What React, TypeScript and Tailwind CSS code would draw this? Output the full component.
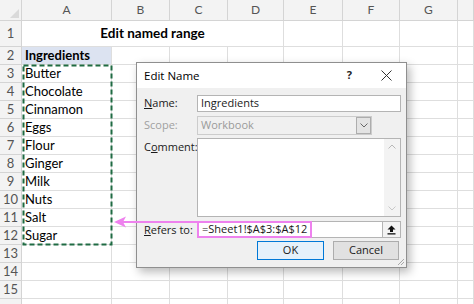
import React from 'react';

const COLS = [
  { key: 'A', w: 'w-[90px]' },
  { key: 'B', w: 'w-[58px]' },
  { key: 'C', w: 'w-[58px]' },
  { key: 'D', w: 'w-[56px]' },
  { key: 'E', w: 'w-[59px]' },
  { key: 'F', w: 'w-[57px]' },
  { key: 'G', w: 'w-[58px]' },
  { key: '', w: 'w-[16px]' },
];

const ITEMS = ['Butter', 'Chocolate', 'Cinnamon', 'Eggs', 'Flour', 'Ginger', 'Milk', 'Nuts', 'Salt', 'Sugar', '', '', '', ''];

function RowNum({ n }: { n: number | string }) {
  return (
    <div className="w-[22px] shrink-0 bg-[#f3f3f3] border-r border-b border-[#d4d4d4] flex items-center justify-center text-[13px] text-[#555]">
      {n}
    </div>
  );
}

function Cell({ w, children, className = '' }: { w: string; children?: React.ReactNode; className?: string }) {
  return (
    <div className={`${w} shrink-0 border-r border-b border-[#dedede] flex items-center pl-[3px] overflow-visible whitespace-nowrap ${className}`}>
      {children}
    </div>
  );
}

function Sheet() {
  return (
    <div className="flex flex-col text-[13px] text-black" style={{ fontFamily: 'Lato, "Liberation Sans", sans-serif' }}>
      {/* column headers */}
      <div className="flex h-[21px]">
        <div className="w-[22px] shrink-0 bg-[#f3f3f3] border-r border-b border-[#d4d4d4] relative">
          <div className="absolute right-[2px] bottom-[2px] w-0 h-0 border-l-[9px] border-l-transparent border-b-[9px] border-b-[#dadada]" />
        </div>
        {COLS.map((c) => (
          <div key={c.w + c.key} className={`${c.w} shrink-0 bg-[#f3f3f3] border-r border-b border-[#d4d4d4] flex items-center justify-center text-[12px] text-[#555]`}>
            {c.key}
          </div>
        ))}
      </div>

      {/* row 1: merged title A1:D1 */}
      <div className="flex h-[26px]">
        <RowNum n={1} />
        <div className="w-[262px] shrink-0 border-r border-b border-[#dedede] flex items-center justify-center font-bold text-[13.5px]">
          Edit named range
        </div>
        {COLS.slice(4).map((c) => (
          <Cell key={c.w + c.key} w={c.w} />
        ))}
      </div>

      {/* row 2 */}
      <div className="flex h-[18px]">
        <RowNum n={2} />
        <Cell w="w-[90px]" className="bg-[#dce3f1] font-bold">Ingredients</Cell>
        {COLS.slice(1).map((c) => (
          <Cell key={c.w + c.key} w={c.w} />
        ))}
      </div>

      {ITEMS.map((item, i) => (
        <div key={i} className="flex h-[18px]">
          {/* the last row only peeks in at the bottom edge, so no number */}
          <RowNum n={i + 3 > 15 ? '' : i + 3} />
          <Cell w="w-[90px]">{item}</Cell>
          {COLS.slice(1).map((c) => (
            <Cell key={c.w + c.key} w={c.w} />
          ))}
        </div>
      ))}
    </div>
  );
}

function Chevron({ up = false, color = '#555' }: { up?: boolean; color?: string }) {
  return (
    <svg width="8" height="5" viewBox="0 0 8 5">
      <path d={up ? 'M0.5 4.5 L4 1 L7.5 4.5' : 'M0.5 0.5 L4 4 L7.5 0.5'} fill="none" stroke={color} strokeWidth="1" />
    </svg>
  );
}

function Dialog() {
  return (
    <div
      className="absolute left-[136px] top-[62px] w-[271px] h-[206px] border border-[#8f8f8f] bg-[#f0f0f0] flex flex-col shadow-[3px_4px_9px_rgba(0,0,0,0.28)] text-[11px] text-[#1a1a1a]"
      style={{ fontFamily: '"Open Sans", "Noto Sans", sans-serif' }}
    >
      {/* title bar */}
      <div className="h-[25px] bg-white flex items-center pl-[7px] pr-[14px]">
        <span className="text-[11.5px] text-black">Edit Name</span>
        <span className="ml-auto mr-[29px] font-bold text-[11px] text-[#222]">?</span>
        <svg width="11" height="11" viewBox="0 0 11 11">
          <path d="M0.5 0.5 L10.5 10.5 M10.5 0.5 L0.5 10.5" stroke="#333" strokeWidth="1" />
        </svg>
      </div>

      {/* body */}
      <div className="flex-1 flex flex-col pl-[7px] pr-[5px] pt-[7px] gap-[4px] relative">
        <div className="flex h-[17px] items-center">
          <span className="w-[53px]"><u>N</u>ame:</span>
          <div className="flex-1 h-full bg-white border border-[#b4b4b4] flex items-center pl-[3px]">Ingredients</div>
        </div>

        <div className="flex h-[19px] items-center">
          <span className="w-[53px] text-[#a0a0a0]">Scope:</span>
          <div className="w-[175px] h-full bg-[#f0f0f0] border border-[#cccccc] flex items-center pl-[3px] text-[#9a9a9a]">
            Workbook
            <div className="ml-auto w-[15px] h-[17px] bg-[#e3e3e3] border border-[#adadad] flex items-center justify-center">
              <Chevron color="#666" />
            </div>
          </div>
        </div>

        <div className="flex h-[79px] mt-[-1px]">
          <span className="w-[53px] pt-[1px]">C<u>o</u>mment:</span>
          <div className="flex-1 h-full bg-white border border-[#b4b4b4] flex">
            <div className="flex-1" />
            <div className="w-[16px] bg-[#f3f3f3] flex flex-col items-center justify-between py-[5px]">
              <Chevron up color="#b8b8b8" />
              <Chevron color="#c8c8c8" />
            </div>
          </div>
        </div>

        <div className="flex h-[17px] items-center">
          <span className="w-[53px] pt-[2px]"><u>R</u>efers to:</span>
          <div className="flex-1 h-full flex">
            <div className="w-[115px] h-full bg-white border-2 border-[#ee82ee] flex items-center pl-[3px] text-[11px]">
              =Sheet1!$A$3:$A$12
            </div>
            <div className="flex-1 h-full bg-white border-y border-[#b4b4b4]" />
            <div className="w-[19px] h-full bg-[#f3f3f3] border border-[#b4b4b4] flex items-center justify-center">
              <svg width="9" height="10" viewBox="0 0 9 10">
                <path d="M4.5 0.5 L8.5 4.5 L6 4.5 L6 7 L3 7 L3 4.5 L0.5 4.5 Z" fill="#111" />
                <rect x="0.5" y="8.2" width="8" height="1.3" fill="#111" />
              </svg>
            </div>
          </div>
        </div>

        <div className="flex h-[19px] justify-end gap-[9px] pr-[2px] mt-[-1px]">
          <div className="w-[67px] h-full bg-[#e5f1fb] border border-[#0078d7] flex items-center justify-center">OK</div>
          <div className="w-[66px] h-full bg-[#e1e1e1] border border-[#adadad] flex items-center justify-center">Cancel</div>
        </div>

        {/* resize grip */}
        <svg className="absolute right-[1px] bottom-[1px]" width="9" height="9" viewBox="0 0 9 9">
          <path d="M8 2 L2 8 M8 5 L5 8" stroke="#a8a8a8" strokeWidth="1" />
        </svg>
      </div>
    </div>
  );
}

export default function App() {
  return (
    <div className="relative w-[474px] h-[304px] overflow-hidden bg-white">
      <Sheet />

      {/* copy-range marquee around A3:A12 */}
      <svg className="absolute left-0 top-0 pointer-events-none" width="474" height="304">
        <rect x="23.5" y="65.5" width="88" height="179" fill="none" stroke="#1f6b43" strokeWidth="2" strokeDasharray="5 3" />
      </svg>

      <Dialog />

      {/* pink pointer arrow */}
      <svg className="absolute left-0 top-0 pointer-events-none" width="474" height="304">
        <line x1="122" y1="222" x2="198" y2="222" stroke="#ee82ee" strokeWidth="2" />
        <path d="M114 222 L126 216.5 L123 222 L126 227.5 Z" fill="#ee82ee" />
      </svg>
    </div>
  );
}
